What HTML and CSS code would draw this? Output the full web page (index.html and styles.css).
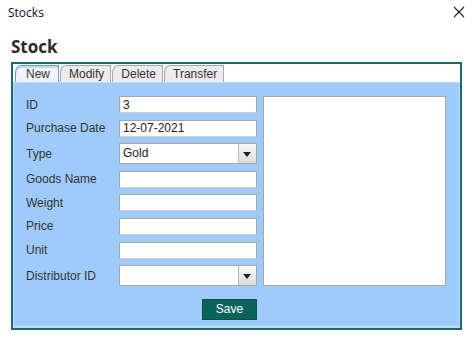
FILE: index.html
```html
<!DOCTYPE html>
<html lang="en">
<head>
    <meta charset="UTF-8">
    <meta name="viewport" content="width=device-width, initial-scale=1.0">
    <title>Stocks</title>
    <link rel="stylesheet" href="styles.css">
</head>
<body>
    <div class="titlebar">
        <span class="window-title">Stocks</span>
        <svg class="close" width="12" height="12" viewBox="0 0 12 12">
            <path d="M1 1 L11 11 M11 1 L1 11" stroke="#222" stroke-width="1.1" fill="none"/>
        </svg>
    </div>
    <h1>Stock</h1>
    <div class="box">
        <div class="tabs">
            <div class="tab active">New</div>
            <div class="tab">Modify</div>
            <div class="tab">Delete</div>
            <div class="tab">Transfer</div>
        </div>
        <div class="panel">
            <div class="form">
                <label>ID</label>
                <input type="text" value="3">
                <label>Purchase Date</label>
                <input type="text" value="12-07-2021">
                <label>Type</label>
                <div class="combo"><span class="combo-value">Gold</span><span class="combo-btn"></span></div>
                <label>Goods Name</label>
                <input type="text">
                <label>Weight</label>
                <input type="text">
                <label>Price</label>
                <input type="text">
                <label>Unit</label>
                <input type="text">
                <label>Distributor ID</label>
                <div class="combo"><span class="combo-value"></span><span class="combo-btn"></span></div>
                <div class="save-row"><button class="save">Save</button></div>
            </div>
            <div class="notes"></div>
        </div>
    </div>
</body>
</html>
```

FILE: styles.css
```css
body {
    margin: 0;
    padding: 0;
    background: #fff;
    font-family: "Liberation Sans", Arial, sans-serif;
    font-size: 12px;
    color: #333;
}
.titlebar {
    height: 24px;
    display: flex;
    align-items: center;
    justify-content: space-between;
    padding: 0 9px 0 8px;
}
.window-title {
    font-family: "Open Sans", "Noto Sans", sans-serif;
    font-size: 12px;
    color: #111;
}
.close {
    display: block;
}
h1 {
    margin: 12px 0 0 11px;
    height: 26px;
    font-family: "Open Sans", "Noto Sans", sans-serif;
    font-size: 17px;
    font-weight: bold;
    color: #2b2b2b;
    line-height: 22px;
}
.box {
    margin-left: 11px;
    width: 447px;
    height: 264px;
    border: 2px solid #1d6b67;
    display: flex;
    flex-direction: column;
}
.tabs {
    height: 18px;
    display: flex;
    align-items: flex-end;
    padding-left: 2px;
}
.tab {
    height: 16px;
    line-height: 16px;
    margin-right: 1px;
    padding: 0 6px 0 8px;
    background: #ececec;
    border: 1px solid #a8a8a8;
    border-bottom: none;
    border-top-left-radius: 6px 8px;
    color: #333;
}
.tab.active {
    padding: 0 8px 0 10px;
    background: #f1f5fb;
    border-color: #6f97c8;
    box-shadow: inset 0 2px 0 #c7daf2;
}
.panel {
    flex: 1;
    background: #9fcbfa;
    border: 1px solid #b9dbfc;
    border-bottom-width: 2px;
    display: flex;
    gap: 6px;
    padding: 13px 13px 0 12px;
}
.form {
    display: grid;
    grid-template-columns: 93px 138px;
    grid-template-rows: 17px 17px 21px 17px 17px 17px 17px 21px;
    row-gap: 6.6px;
    align-items: center;
}
.form label {
    color: #333;
}
.form input {
    box-sizing: border-box;
    height: 17px;
    width: 138px;
    margin: 0;
    padding: 0 3px;
    border: 1px solid #a7a7a7;
    border-bottom-color: #cfcfcf;
    font-family: inherit;
    font-size: 12px;
    color: #222;
    background: #fff;
}
.combo {
    box-sizing: border-box;
    height: 21px;
    display: flex;
    border: 1px solid #a7a7a7;
    background: #fff;
}
.combo-value {
    flex: 1;
    padding-left: 3px;
    line-height: 19px;
    color: #222;
}
.combo-btn {
    width: 17px;
    border-left: 1px solid #b8b8b8;
    background: linear-gradient(#f8f8f8, #dcdcdc);
    position: relative;
}
.combo-btn::after {
    content: "";
    position: absolute;
    left: 4px;
    top: 8px;
    border-left: 4.5px solid transparent;
    border-right: 4.5px solid transparent;
    border-top: 5px solid #222;
}
.save-row {
    grid-column: 1 / 3;
    display: flex;
    justify-content: flex-end;
    margin-top: -0.5px;
}
.save {
    width: 55px;
    height: 21px;
    border: 1px solid #0f4f4b;
    background: #0b625d;
    color: #fff;
    font-family: inherit;
    font-size: 12px;
    padding: 0;
}
.notes {
    width: 182px;
    height: 188px;
    background: #fff;
    border: 1px solid #a7a7a7;
}
```
